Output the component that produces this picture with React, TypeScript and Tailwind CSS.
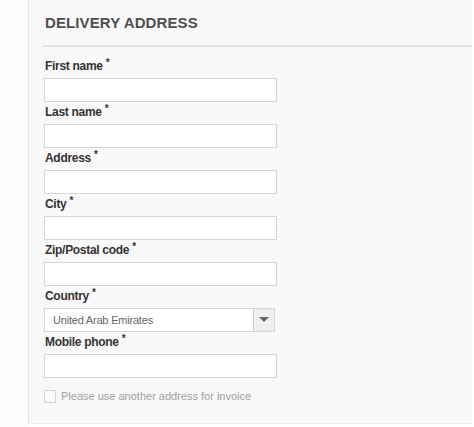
import React from "react";

const Label = ({ label }: { label: string }) => (
  <div className="h-[16px] leading-[16px] text-[12px] font-bold text-[#333] pl-[1px] tracking-[-0.3px]">
    {label}
    <span className="text-[10px] font-bold ml-[3px] relative top-[-4px]">*</span>
  </div>
);

const Field = ({ label }: { label: string }) => (
  <div className="flex flex-col mb-[2px]">
    <Label label={label} />
    <input
      className="mt-[4px] w-[233px] h-[24px] bg-white border border-[#d6d6d6] outline-none"
      type="text"
    />
  </div>
);

export default function App() {
  return (
    <div
      className="flex w-[474px] h-[427px] bg-white"
      style={{ fontFamily: '"Liberation Sans", Arial, sans-serif' }}
    >
      <div className="w-[28px] h-[427px] bg-[#fcfcfc]" />
      <div className="w-[444px] h-[424px] border-l border-[#e2e2e2] border-b border-b-[#ececec] bg-[#f9f9f9] flex flex-col">
        <div className="mt-[14px] h-[18px] leading-[18px] pl-[16px] text-[15px] font-bold text-[#4f4f4f] tracking-[0.1px]">
          DELIVERY ADDRESS
        </div>
        <div className="mt-[13px] ml-[14px] h-[2px] bg-[#e3e3e3]" />
        <div className="mt-[11px] pl-[15px] flex flex-col">
          <Field label="First name" />
          <Field label="Last name" />
          <Field label="Address" />
          <Field label="City" />
          <Field label="Zip/Postal code" />
          <div className="flex flex-col mb-[2px]">
            <Label label="Country" />
            <div className="mt-[4px] w-[231px] h-[24px] bg-white border border-[#d6d6d6] flex items-center">
              <span className="flex-1 pl-[8px] text-[11px] tracking-[-0.2px] text-[#666]">United Arab Emirates</span>
              <div className="w-[21px] h-[22px] bg-[#f0f0f0] border-l border-[#d0d0d0] flex items-center justify-center">
                <svg width="10" height="6" viewBox="0 0 10 6">
                  <polygon points="0,0 10,0 5,5" fill="#666" />
                </svg>
              </div>
            </div>
          </div>
          <Field label="Mobile phone" />
          <div className="mt-[8px] flex items-center">
            <div className="w-[12px] h-[13px] border border-[#d4d4d4] bg-[#fafafa]" />
            <span className="ml-[5px] text-[11px] text-[#a0a0a0]">
              Please use another address for invoice
            </span>
          </div>
        </div>
      </div>
    </div>
  );
}
